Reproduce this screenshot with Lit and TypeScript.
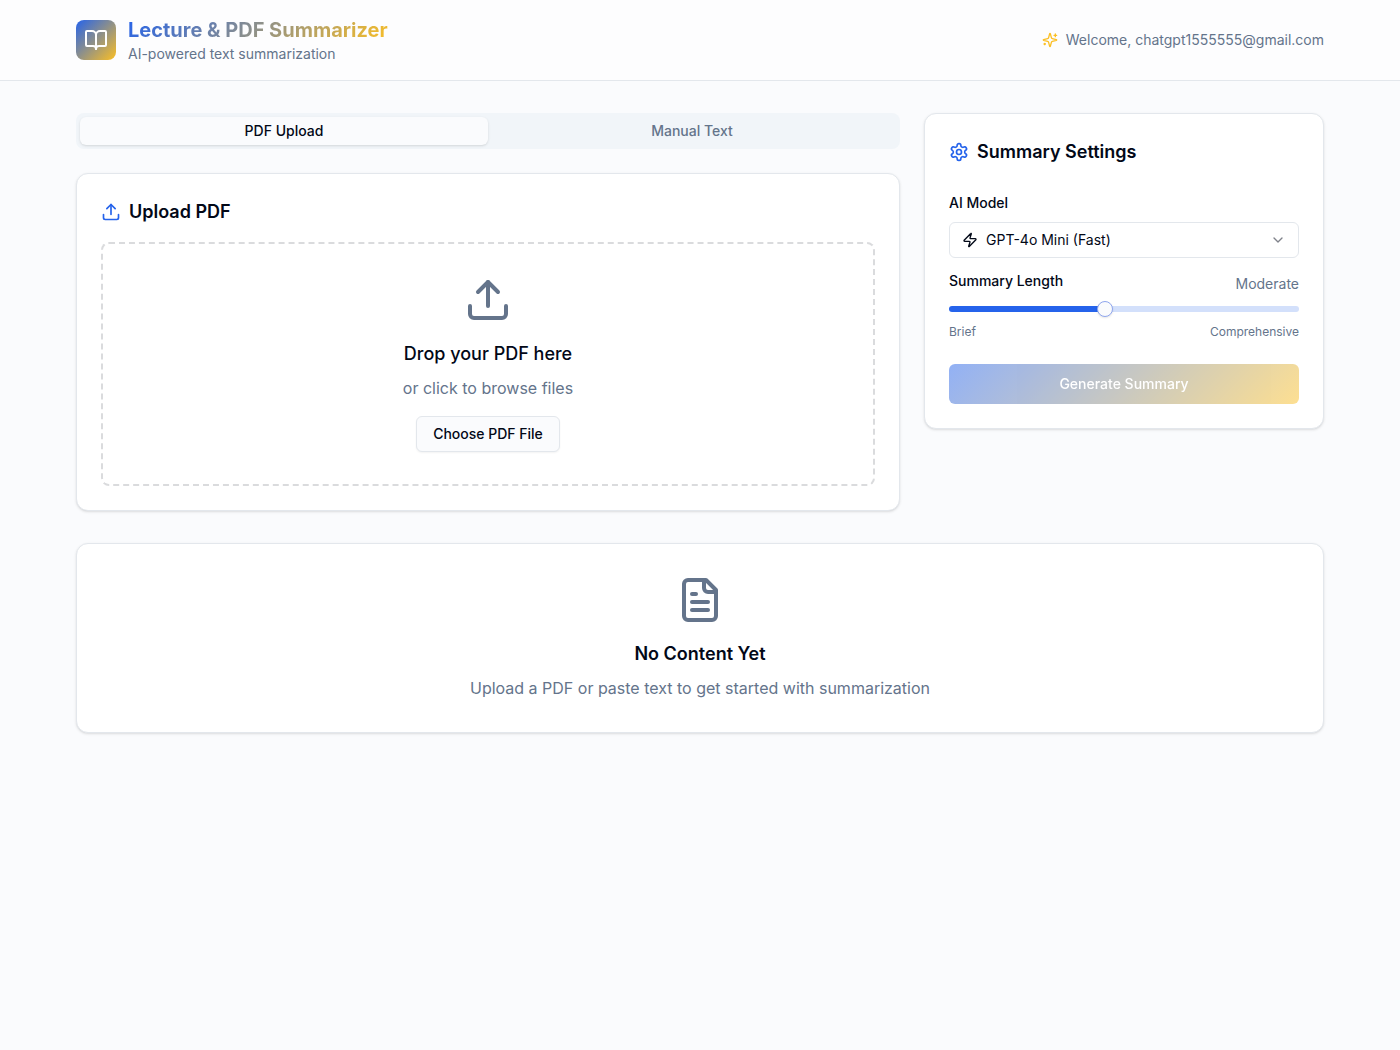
import { LitElement, html, css, svg } from "lit";
import { customElement, state } from "lit/decorators.js";

const icon = (name: string, body: unknown) => html`
  <svg class="icon ${name}" viewBox="0 0 24 24" aria-hidden="true">${body}</svg>
`;

const uploadShape = svg`
  <path d="M21 15v4a2 2 0 0 1-2 2H5a2 2 0 0 1-2-2v-4"></path>
  <path d="M17 8l-5-5-5 5"></path>
  <path d="M12 3v12"></path>`;

const bookShape = svg`
  <path d="M12 7v14"></path>
  <path d="M3 18a1 1 0 0 1-1-1V4a1 1 0 0 1 1-1h5a4 4 0 0 1 4 4 4 4 0 0 1 4-4h5a1 1 0 0 1 1 1v13a1 1 0 0 1-1 1h-6a3 3 0 0 0-3 3 3 3 0 0 0-3-3z"></path>`;

const sparklesShape = svg`
  <path d="M9.937 15.5A2 2 0 0 0 8.5 14.063l-6.135-1.582a.5.5 0 0 1 0-.962L8.5 9.936A2 2 0 0 0 9.937 8.5l1.582-6.135a.5.5 0 0 1 .963 0L14.063 8.5A2 2 0 0 0 15.5 9.937l6.135 1.581a.5.5 0 0 1 0 .964L15.5 14.063a2 2 0 0 0-1.437 1.437l-1.582 6.135a.5.5 0 0 1-.963 0z"></path>
  <path d="M20 3v4"></path>
  <path d="M22 5h-4"></path>
  <path d="M4 17v2"></path>
  <path d="M5 18H3"></path>`;

const gearShape = svg`
  <path d="M12.22 2h-.44a2 2 0 0 0-2 2v.18a2 2 0 0 1-1 1.73l-.43.25a2 2 0 0 1-2 0l-.15-.08a2 2 0 0 0-2.73.73l-.22.38a2 2 0 0 0 .73 2.73l.15.1a2 2 0 0 1 1 1.72v.51a2 2 0 0 1-1 1.74l-.15.09a2 2 0 0 0-.73 2.73l.22.38a2 2 0 0 0 2.73.73l.15-.08a2 2 0 0 1 2 0l.43.25a2 2 0 0 1 1 1.73V20a2 2 0 0 0 2 2h.44a2 2 0 0 0 2-2v-.18a2 2 0 0 1 1-1.73l.43-.25a2 2 0 0 1 2 0l.15.08a2 2 0 0 0 2.73-.73l.22-.39a2 2 0 0 0-.73-2.73l-.15-.08a2 2 0 0 1-1-1.74v-.5a2 2 0 0 1 1-1.74l.15-.09a2 2 0 0 0 .73-2.73l-.22-.38a2 2 0 0 0-2.73-.73l-.15.08a2 2 0 0 1-2 0l-.43-.25a2 2 0 0 1-1-1.73V4a2 2 0 0 0-2-2z"></path>
  <circle cx="12" cy="12" r="3"></circle>`;

const boltShape = svg`
  <path d="M4 14a1 1 0 0 1-.78-1.63l9.9-10.2a.5.5 0 0 1 .86.46l-1.92 6.02A1 1 0 0 0 13 10h7a1 1 0 0 1 .78 1.63l-9.9 10.2a.5.5 0 0 1-.86-.46l1.92-6.02A1 1 0 0 0 11 14z"></path>`;

const chevronShape = svg`<path d="m6 9 6 6 6-6"></path>`;

const fileShape = svg`
  <path d="M15 2H6a2 2 0 0 0-2 2v16a2 2 0 0 0 2 2h12a2 2 0 0 0 2-2V7Z"></path>
  <path d="M14 2v4a2 2 0 0 0 2 2h4"></path>
  <path d="M10 9H8"></path>
  <path d="M16 13H8"></path>
  <path d="M16 17H8"></path>`;

@customElement("app-root")
export class AppRoot extends LitElement {
  @state() private tab: "pdf" | "text" = "pdf";
  @state() private length = 5;

  static styles = css`
    :host {
      --ink: #020817;
      --muted: #64748b;
      --line: #e3e7ec;
      --page: #fafbfd;
      --blue: #2563eb;
      --amber: #fbbf24;
      --brand: linear-gradient(135deg, var(--blue), var(--amber));
      display: block;
      min-height: 100vh;
      background: var(--page);
      color: var(--ink);
      font: 400 16px/24px Inter, "Liberation Sans", sans-serif;
    }
    *, *::before, *::after { box-sizing: border-box; }
    h1, h2, h3, p { margin: 0; }
    button, input, select { font: inherit; color: inherit; margin: 0; }
    button { cursor: pointer; }

    .icon {
      display: block;
      flex: none;
      width: 16px;
      height: 16px;
      fill: none;
      stroke: currentColor;
      stroke-width: 2;
      stroke-linecap: round;
      stroke-linejoin: round;
    }
    .icon.medium { width: 20px; height: 20px; color: var(--blue); }
    .icon.book { width: 24px; height: 24px; }
    .icon.large { width: 48px; height: 48px; color: var(--muted); margin-bottom: 16px; }
    .icon.sparkles { color: var(--amber); }

    .container { max-width: 1280px; margin: 0 auto; padding: 0 16px; }

    .header { background: #fdfdfe; border-bottom: 1px solid var(--line); }
    .bar {
      display: flex;
      align-items: center;
      justify-content: space-between;
      padding-top: 16px;
      padding-bottom: 16px;
    }
    .brand { display: flex; align-items: center; gap: 12px; }
    .logo { padding: 8px; border-radius: 8px; color: #fff; background: var(--brand); }
    .title {
      font-size: 20px;
      line-height: 28px;
      font-weight: 700;
      color: transparent;
      background: var(--brand);
      background-clip: text;
      -webkit-background-clip: text;
    }
    .small { font-size: 14px; line-height: 20px; color: var(--muted); }
    .welcome { display: flex; align-items: center; gap: 8px; }

    .main { display: grid; gap: 32px; padding-top: 32px; padding-bottom: 32px; }
    .columns {
      display: grid;
      grid-template-columns: repeat(3, minmax(0, 1fr));
      gap: 24px;
      align-items: start;
    }
    .source { grid-column: span 2; display: grid; gap: 24px; }

    .tabs {
      display: grid;
      grid-template-columns: 1fr 1fr;
      padding: 4px;
      border-radius: 8px;
      background: #f1f5f9;
    }
    .tab {
      border: 0;
      padding: 4px 12px;
      border-radius: 6px;
      background: none;
      color: var(--muted);
      font-size: 14px;
      line-height: 20px;
      font-weight: 500;
    }
    .tab.active {
      background: var(--page);
      color: var(--ink);
      box-shadow: 0 1px 3px rgb(0 0 0 / 0.1), 0 1px 2px -1px rgb(0 0 0 / 0.1);
    }

    .card {
      border: 1px solid var(--line);
      border-radius: 12px;
      background: #fff;
      padding: 24px;
      box-shadow: 0 1px 3px rgb(0 0 0 / 0.1), 0 1px 2px -1px rgb(0 0 0 / 0.1);
    }
    .heading {
      display: flex;
      align-items: center;
      gap: 8px;
      font-size: 18px;
      line-height: 28px;
      font-weight: 600;
    }
    .centered { display: flex; flex-direction: column; align-items: center; text-align: center; }
    .dropzone {
      margin-top: 16px;
      padding: 32px;
      border: 2px dashed #dadbdd;
      border-radius: 8px;
    }
    .lead { font-size: 18px; line-height: 28px; font-weight: 500; margin-bottom: 8px; }
    .lead.strong { font-weight: 600; }
    .hint { color: var(--muted); }
    .choose {
      margin-top: 16px;
      padding: 7px 16px;
      border: 1px solid var(--line);
      border-radius: 6px;
      background: var(--page);
      font-size: 14px;
      line-height: 20px;
      font-weight: 500;
      box-shadow: 0 1px 2px rgb(0 0 0 / 0.05);
    }
    .empty { padding: 32px; }

    .model { margin: 24px 0 16px; }
    .label { font-size: 14px; line-height: 14px; font-weight: 500; }
    .picker { position: relative; margin-top: 8px; }
    .select {
      display: block;
      width: 100%;
      height: 36px;
      padding: 0 36px;
      appearance: none;
      border: 1px solid var(--line);
      border-radius: 6px;
      background: transparent;
      font-size: 14px;
      line-height: 20px;
    }
    .picker .icon { position: absolute; top: 10px; pointer-events: none; }
    .picker .bolt { left: 13px; }
    .picker .chevron { right: 13px; opacity: 0.5; }

    .split { display: flex; align-items: flex-start; justify-content: space-between; }
    .slider {
      display: block;
      width: 100%;
      height: 6px;
      margin: 12px 0;
      appearance: none;
      border-radius: 3px;
      background:
        linear-gradient(var(--blue), var(--blue)) 0 0 / var(--fill) 100% no-repeat,
        #d3e0fb;
    }
    .slider::-webkit-slider-thumb {
      appearance: none;
      width: 16px;
      height: 16px;
      border: 1px solid #8fa6ee;
      border-radius: 50%;
      background: var(--page);
      box-shadow: 0 1px 2px rgb(0 0 0 / 0.1);
    }
    .tiny { font-size: 12px; line-height: 16px; color: var(--muted); }
    .generate {
      display: block;
      width: 100%;
      margin-top: 24px;
      padding: 10px 32px;
      border: 0;
      border-radius: 6px;
      background: var(--brand);
      color: #fff;
      font-size: 14px;
      line-height: 20px;
      font-weight: 500;
      opacity: 0.5;
    }

    @media (max-width: 900px) {
      .columns { grid-template-columns: minmax(0, 1fr); }
      .source { grid-column: auto; }
    }
  `;

  private get lengthName() {
    return this.length < 4 ? "Brief" : this.length < 8 ? "Moderate" : "Comprehensive";
  }

  private renderTab(id: "pdf" | "text", text: string) {
    const active = this.tab === id;
    return html`<button
      class="tab ${active ? "active" : ""}"
      type="button"
      role="tab"
      aria-selected=${active}
      @click=${() => (this.tab = id)}
    >${text}</button>`;
  }

  private renderSettings() {
    const fill = `calc(8px + (100% - 16px) * ${(this.length - 1) / 9})`;
    return html`
      <section class="card">
        <h2 class="heading">${icon("medium", gearShape)}Summary Settings</h2>
        <div class="model">
          <label class="label" for="model">AI Model</label>
          <div class="picker">
            <select class="select" id="model">
              <option>GPT-4o Mini (Fast)</option>
            </select>
            ${icon("bolt", boltShape)} ${icon("chevron", chevronShape)}
          </div>
        </div>
        <div class="split">
          <label class="label" for="length">Summary Length</label>
          <span class="small">${this.lengthName}</span>
        </div>
        <input
          class="slider"
          id="length"
          type="range"
          min="1"
          max="10"
          .value=${String(this.length)}
          style="--fill: ${fill}"
          @input=${(e: Event) => (this.length = Number((e.target as HTMLInputElement).value))}
        />
        <div class="split tiny"><span>Brief</span><span>Comprehensive</span></div>
        <button class="generate" type="button" disabled>Generate Summary</button>
      </section>
    `;
  }

  render() {
    return html`
      <header class="header">
        <div class="container bar">
          <div class="brand">
            <div class="logo">${icon("book", bookShape)}</div>
            <div>
              <h1 class="title">Lecture &amp; PDF Summarizer</h1>
              <p class="small">AI-powered text summarization</p>
            </div>
          </div>
          <div class="welcome small">
            ${icon("sparkles", sparklesShape)}<span>Welcome, chatgpt1555555@gmail.com</span>
          </div>
        </div>
      </header>
      <main class="container main">
        <div class="columns">
          <div class="source">
            <div class="tabs" role="tablist">
              ${this.renderTab("pdf", "PDF Upload")}${this.renderTab("text", "Manual Text")}
            </div>
            <section class="card">
              <h2 class="heading">${icon("medium", uploadShape)}Upload PDF</h2>
              <div class="dropzone centered">
                ${icon("large", uploadShape)}
                <p class="lead">Drop your PDF here</p>
                <p class="hint">or click to browse files</p>
                <button class="choose" type="button">Choose PDF File</button>
              </div>
            </section>
          </div>
          ${this.renderSettings()}
        </div>
        <section class="card empty centered">
          ${icon("large", fileShape)}
          <h3 class="lead strong">No Content Yet</h3>
          <p class="hint">Upload a PDF or paste text to get started with summarization</p>
        </section>
      </main>
    `;
  }
}
